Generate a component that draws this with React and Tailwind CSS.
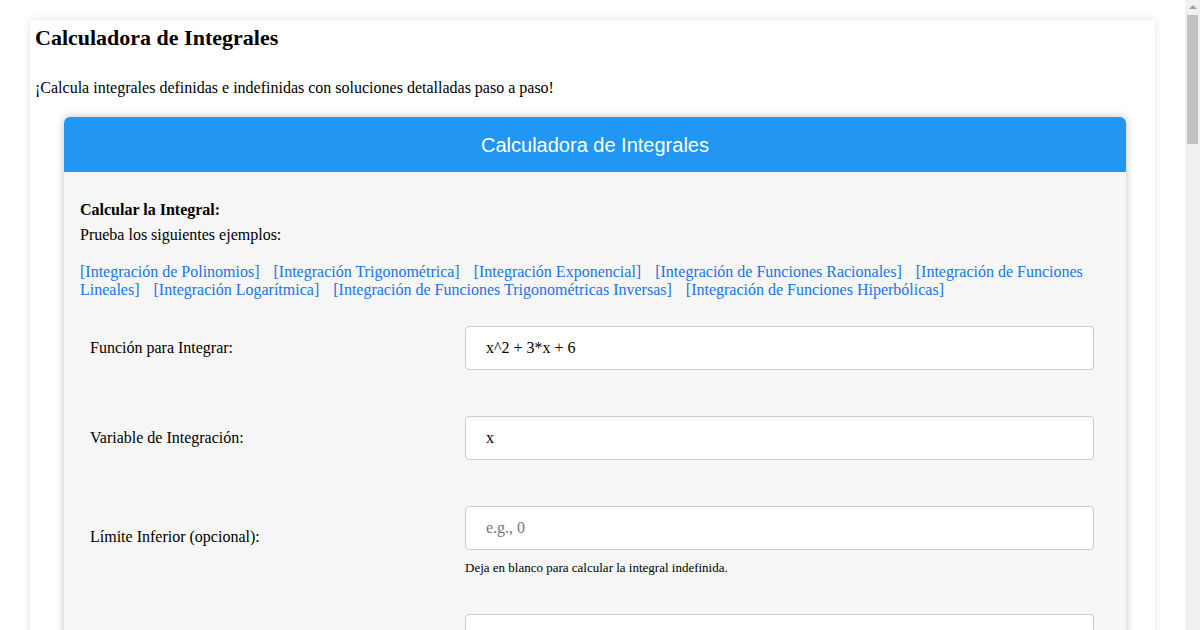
const EXAMPLES = [
  'Integración de Polinomios',
  'Integración Trigonométrica',
  'Integración Exponencial',
  'Integración de Funciones Racionales',
  'Integración de Funciones Lineales',
  'Integración Logarítmica',
  'Integración de Funciones Trigonométricas Inversas',
  'Integración de Funciones Hiperbólicas',
];

function Row({ label, value, placeholder, hint, className }) {
  return (
    <div className={`flex items-center ${className}`}>
      <label className={`w-[385px] pl-[10px] text-[16px] ${hint ? 'pb-[8px]' : ''}`}>{label}</label>
      <div className="w-[629px]">
        <input
          defaultValue={value}
          placeholder={placeholder}
          className="block h-[44px] w-full rounded-[4px] border border-[#cccccc] bg-white px-[20px] text-[16px] text-black outline-none placeholder:text-[#757575]"
          style={{ fontFamily: '"Liberation Serif", serif' }}
        />
        {hint && <p className="mt-[10px] text-[13px] leading-[16px]">{hint}</p>}
      </div>
    </div>
  );
}

function Scrollbar() {
  return (
    <div className="flex h-screen w-[15px] shrink-0 flex-col items-center bg-[#f1f1f1]">
      <div className="mt-[5px] h-0 w-0 border-x-[4px] border-b-[4px] border-x-transparent border-b-[#a3a3a3]" />
      <div className="mt-[6px] h-[129px] w-[11px] bg-[#c1c1c1]" />
    </div>
  );
}

export default function App() {
  return (
    <div className="flex h-screen bg-white text-black" style={{ fontFamily: '"Liberation Serif", "Times New Roman", serif' }}>
      <div className="h-screen flex-1 overflow-hidden">
        <div className="mx-auto mt-[20px] w-[1125px] bg-white px-[5px] pb-[40px] shadow-[0_0_8px_rgba(0,0,0,0.12)]">
          <h2 className="pt-[4px] text-[22px] font-bold leading-[28px]">Calculadora de Integrales</h2>
          <p className="mt-[27px] text-[16px] leading-[18px]">¡Calcula integrales definidas e indefinidas con soluciones detalladas paso a paso!</p>

          {/* card */}
          <div className="ml-[29px] mt-[20px] w-[1062px] overflow-hidden rounded-[6px] bg-[#f6f6f6] shadow-[0_0_8px_rgba(0,0,0,0.25)]">
            <div
              className="flex h-[55px] items-center justify-center bg-[#2196f3] text-[20px] text-white"
              style={{ fontFamily: '"Liberation Sans", Arial, sans-serif' }}
            >
              Calculadora de Integrales
            </div>
            <div className="px-[16px] pb-[30px] pt-[29px]">
              <p className="text-[16px] font-bold leading-[18px]">Calcular la Integral:</p>
              <p className="mt-[7px] text-[16px] leading-[18px]">Prueba los siguientes ejemplos:</p>
              <p className="mt-[19px] pr-[20px] text-[16px] leading-[18px]">
                {EXAMPLES.map((e) => (
                  <span key={e}>
                    <a href="#" className="mr-[10px] text-[#1a73e8]">[{e}]</a>{' '}
                  </span>
                ))}
              </p>

              <Row className="mt-[27px]" label="Función para Integrar:" value="x^2 + 3*x + 6" />
              <Row className="mt-[46px]" label="Variable de Integración:" value="x" />
              <Row
                className="mt-[46px]"
                label="Límite Inferior (opcional):"
                placeholder="e.g., 0"
                hint="Deja en blanco para calcular la integral indefinida."
              />
              <Row
                className="mt-[38px]"
                label="Límite Superior (opcional):"
                placeholder="e.g., 1"
                hint="Deja en blanco para calcular la integral indefinida."
              />
            </div>
          </div>
        </div>
      </div>
      <Scrollbar />
    </div>
  );
}
